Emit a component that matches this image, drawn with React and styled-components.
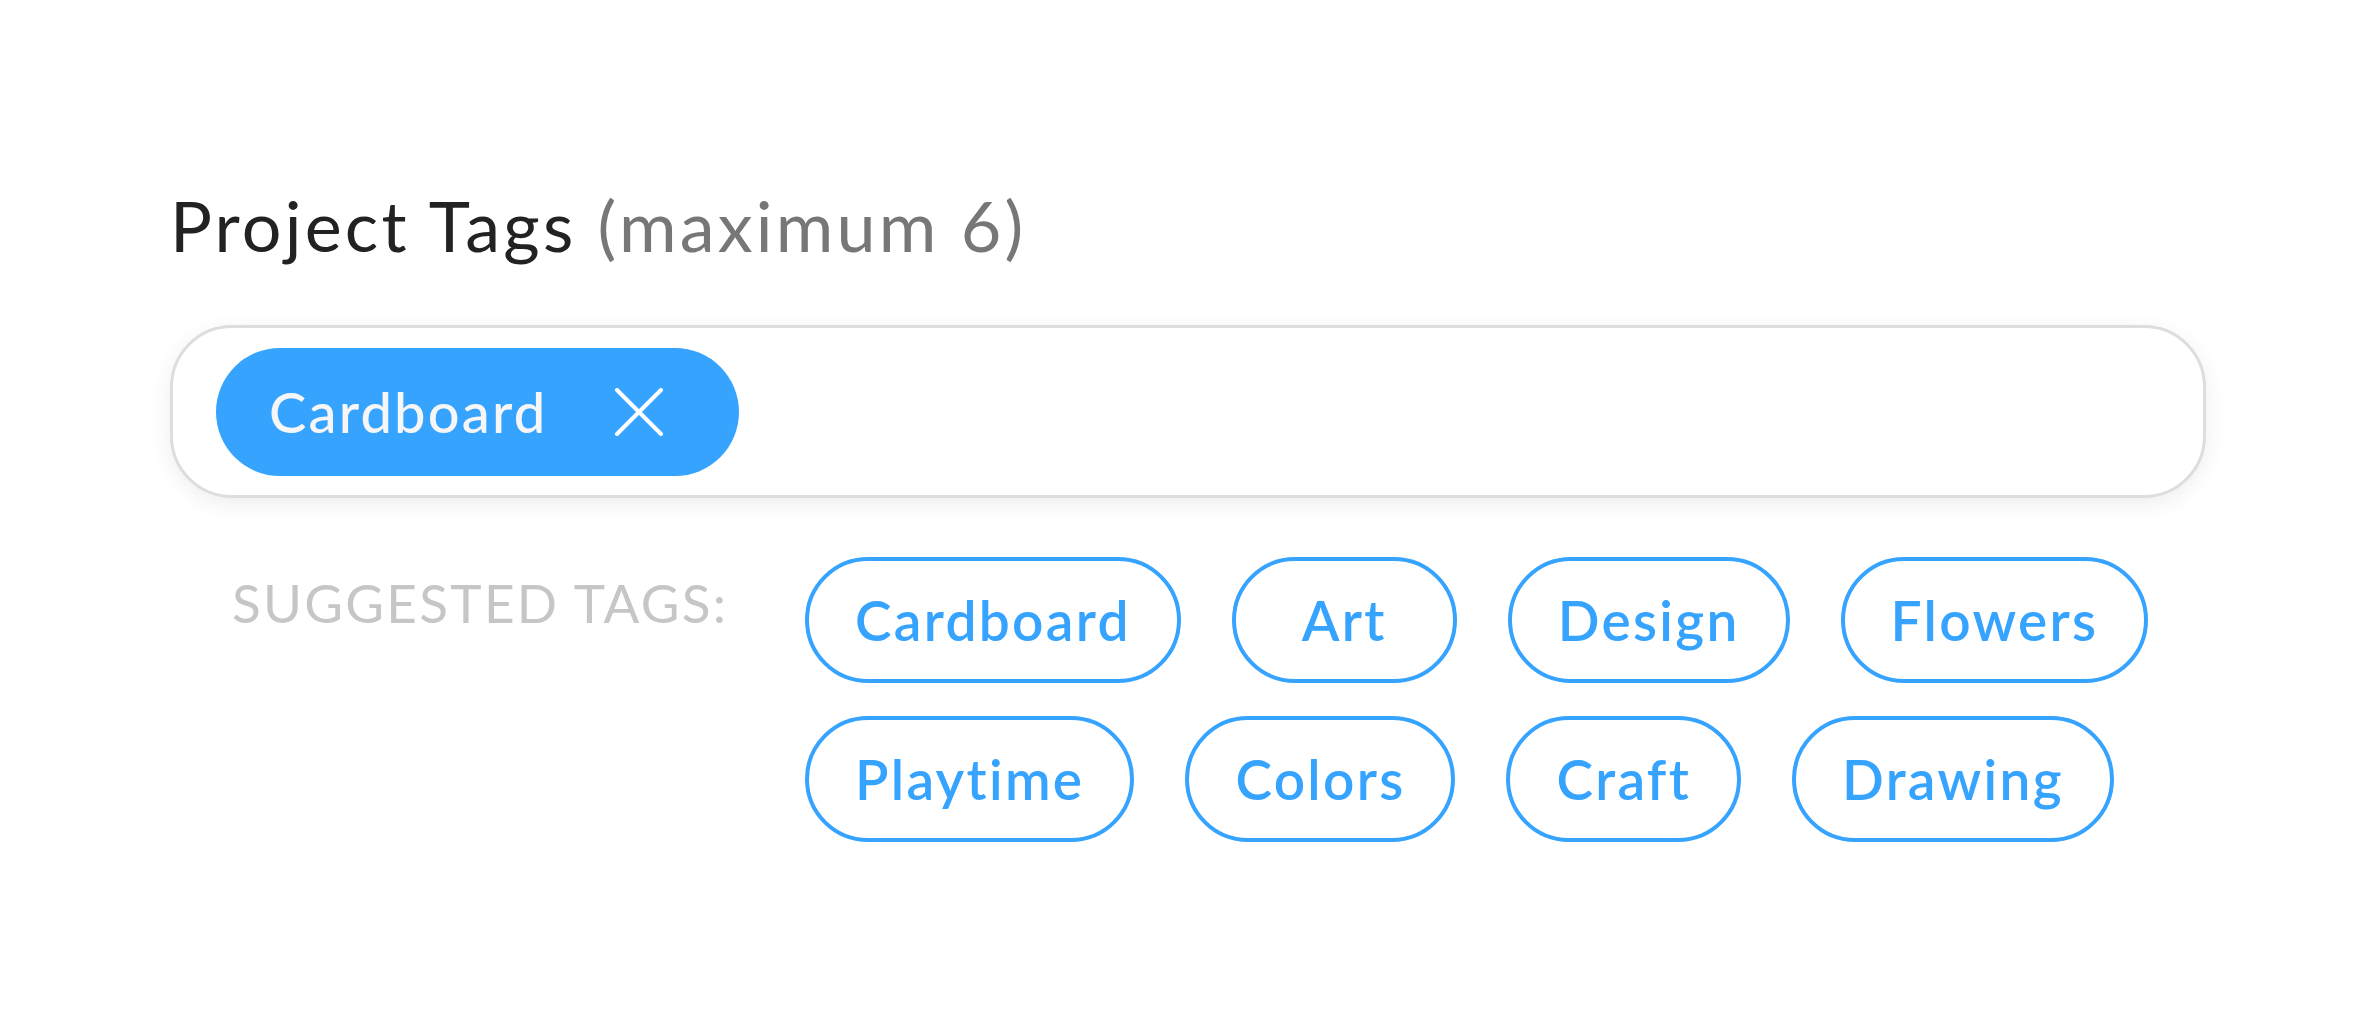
import styled, { createGlobalStyle } from 'styled-components';

const GlobalStyle = createGlobalStyle`
    html, body {
        margin: 0;
        padding: 0;
        background: #ffffff;
    }
    body {
        font-family: Lato, "Open Sans", sans-serif;
    }
`

const BLUE = '#36a3ff'

const Page = styled.div`
    width: 2036px;
    padding: 190px 0 0 170px;
`

const Title = styled.h1`
    margin: 0 0 65px;
    font-size: 70px;
    font-weight: 400;
    line-height: 1;
    color: #222222;
    letter-spacing: 3.2px;
`

const Hint = styled.span`
    color: #777777;
`

const TagInput = styled.div`
    display: flex;
    align-items: center;
    box-sizing: border-box;
    height: 173px;
    padding: 0 43px;
    border: 3px solid #dddddd;
    border-radius: 62px;
    background: #ffffff;
    box-shadow: 0 6px 22px rgba(0, 0, 0, 0.07);
`

const Chip = styled.div`
    display: flex;
    align-items: center;
    height: 128px;
    padding: 0 75px 0 53px;
    gap: 67px;
    border-radius: 64px;
    background: ${BLUE};
    color: #f6f6f6;
    font-size: 56px;
    font-weight: 500;
    letter-spacing: 2.2px;
`

const Remove = styled.svg`
    width: 50px;
    height: 48px;
    display: block;
`

const Suggestions = styled.div`
    display: flex;
    align-items: flex-start;
    margin-top: 59px;
`

const Label = styled.div`
    width: 573px;
    flex-shrink: 0;
    padding: 19px 0 0 62px;
    font-size: 53px;
    line-height: 1;
    color: #c6c6c6;
    letter-spacing: 2.3px;
    text-transform: uppercase;
`

const TagList = styled.div`
    display: flex;
    flex-wrap: wrap;
    column-gap: 51px;
    row-gap: 33px;
`

const Tag = styled.button`
    box-sizing: border-box;
    height: 126px;
    min-width: 225px;
    padding: 0 46px;
    border: 4px solid ${BLUE};
    border-radius: 63px;
    background: #ffffff;
    color: ${BLUE};
    font-family: inherit;
    font-size: 55px;
    font-weight: 600;
    letter-spacing: 2.3px;
    cursor: pointer;
`

const suggested = ['Cardboard', 'Art', 'Design', 'Flowers', 'Playtime', 'Colors', 'Craft', 'Drawing']

export default function App() {
    return <Page>
        <GlobalStyle/>
        <Title>Project Tags <Hint>(maximum 6)</Hint></Title>

        <TagInput>
            <Chip>
                Cardboard
                <Remove viewBox="0 0 50 48" fill="none" stroke="#ffffff" strokeWidth="4" strokeLinecap="round">
                    <path d="M3 2 L47 46 M47 2 L3 46"/>
                </Remove>
            </Chip>
        </TagInput>

        <Suggestions>
            <Label>Suggested Tags:</Label>
            <TagList>
                {suggested.map(t => <Tag key={t}>{t}</Tag>)}
            </TagList>
        </Suggestions>
    </Page>
}
